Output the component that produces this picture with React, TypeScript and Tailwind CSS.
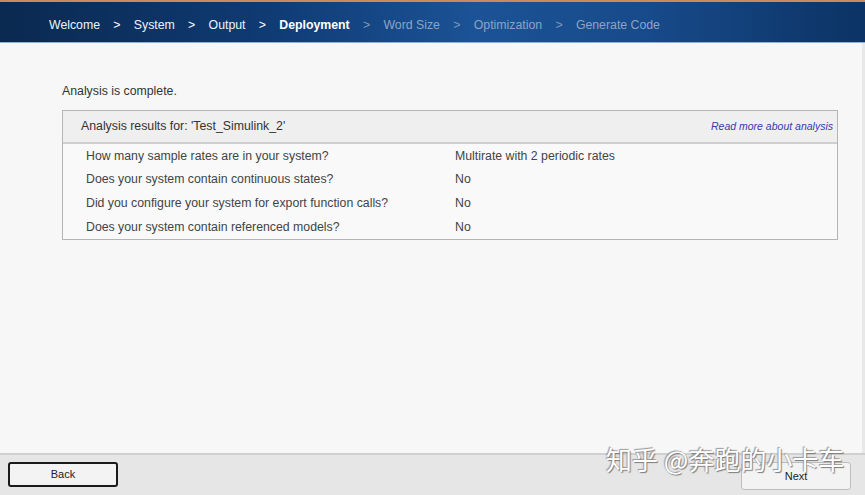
import React from "react";

const steps = [
  { label: "Welcome", state: "done" },
  { label: "System", state: "done" },
  { label: "Output", state: "done" },
  { label: "Deployment", state: "active" },
  { label: "Word Size", state: "todo" },
  { label: "Optimization", state: "todo" },
  { label: "Generate Code", state: "todo" },
];

const rows = [
  ["How many sample rates are in your system?", "Multirate with 2 periodic rates"],
  ["Does your system contain continuous states?", "No"],
  ["Did you configure your system for export function calls?", "No"],
  ["Does your system contain referenced models?", "No"],
];

export default function App() {
  return (
    <div
      className="relative w-[865px] h-[495px] overflow-hidden bg-[#f7f7f7] flex flex-col"
      style={{ fontFamily: '"Liberation Sans", Arial, sans-serif' }}
    >
      <div className="h-[2px] bg-[#c98a60]" />
      <div className="h-[41px] flex items-center pl-[49px] pt-[7px] bg-[linear-gradient(90deg,#0a2950_0%,#0f3a72_30%,#1b5396_55%,#174a8a_75%,#0c3364_100%)] border-b border-[#8fb0d8]">
        {steps.map((s, i) => (
          <React.Fragment key={s.label}>
            {i > 0 && (
              <span
                className={`mx-[13.3px] text-[12.3px] ${
                  i <= 3 ? "text-white" : "text-[#7f97b8]"
                }`}
              >
                &gt;
              </span>
            )}
            <span
              className={`text-[12.3px] ${
                s.state === "active"
                  ? "font-bold text-white"
                  : s.state === "done"
                  ? "text-[#eef3fa]"
                  : "text-[#8ea4c2]"
              }`}
            >
              {s.label}
            </span>
          </React.Fragment>
        ))}
      </div>

      <div className="flex-1 border-r-[3px] border-[#e8e8e8] pl-[62px] pr-[24px] pt-[41px]">
        <div className="text-[12.3px] text-[#333] leading-[14px]">Analysis is complete.</div>
        <div className="mt-[12px] border border-[#b5b5b5] bg-white">
          <div className="h-[33px] flex items-center justify-between bg-[#efefef] border-b-2 border-[#cfcfcf] pl-[18px] pr-[4px]">
            <span className="text-[12.3px] text-[#333]">Analysis results for: 'Test_Simulink_2'</span>
            <span className="text-[10.5px] italic text-[#3a3ab0]">Read more about analysis</span>
          </div>
          <div className="bg-[#f9f9f9]">
            {rows.map(([q, a]) => (
              <div key={q} className="h-[23.7px] flex items-center text-[12.3px] text-[#444]">
                <span className="pl-[23px] w-[392px]">{q}</span>
                <span>{a}</span>
              </div>
            ))}
          </div>
        </div>
      </div>

      <div className="h-[42px] bg-[#e6e6e6] border-t-2 border-[#d0d0d0] flex items-start justify-between pl-[8px] pr-[14px] pt-[7px]">
        <button className="w-[110px] h-[25px] rounded-[3px] border-2 border-[#1a1a1a] bg-[#f3f3f3] text-[11px] text-[#222]">
          Back
        </button>
        <button className="w-[110px] h-[28px] rounded-[3px] border border-[#bdbdbd] bg-[#f3f3f3] text-[11px] text-[#222] pt-[1px]">
          Next
        </button>
      </div>

      <div
        className="absolute left-[606px] top-[445px] text-[26px] leading-[28px] text-white pointer-events-none"
        style={{
          fontFamily: '"Noto Sans CJK SC", sans-serif',
          textShadow: "1px 1px 1px #7a7a7a, -1px -1px 1px #9a9a9a",
        }}
      >
        知乎 @奔跑的小卡车
      </div>
    </div>
  );
}
